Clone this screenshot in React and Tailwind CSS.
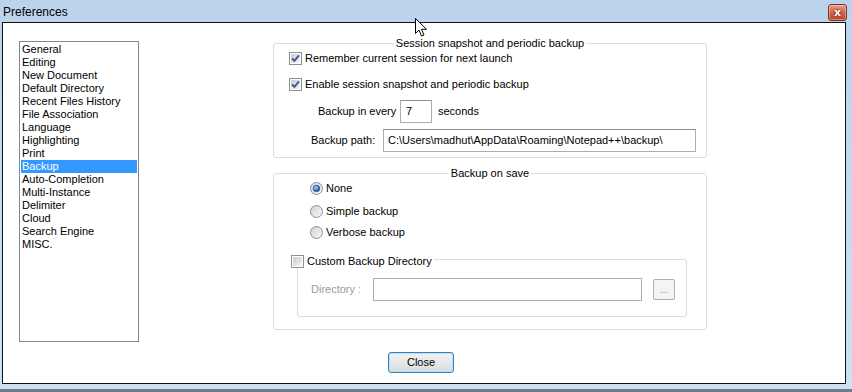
import React from 'react';

const categories = [
  'General',
  'Editing',
  'New Document',
  'Default Directory',
  'Recent Files History',
  'File Association',
  'Language',
  'Highlighting',
  'Print',
  'Backup',
  'Auto-Completion',
  'Multi-Instance',
  'Delimiter',
  'Cloud',
  'Search Engine',
  'MISC.',
];

// Win7 style checkbox
function CheckBox({ checked }) {
  return (
    <svg width="13" height="13" viewBox="0 0 13 13" className="shrink-0">
      <defs>
        <linearGradient id="cbIn" x1="0" y1="0" x2="1" y2="1">
          <stop offset="0" stopColor="#c9cdd2" />
          <stop offset="1" stopColor="#f4f4f4" />
        </linearGradient>
      </defs>
      <rect x="0.5" y="0.5" width="12" height="12" fill="#fff" stroke="#8e8f8f" />
      <rect x="2" y="2" width="9" height="9" fill="url(#cbIn)" />
      {checked && (
        <path d="M3 6.3 L5.4 8.8 L10 3.4" fill="none" stroke="#3a5592" strokeWidth="1.8" />
      )}
    </svg>
  );
}

function Radio({ checked }) {
  return (
    <svg width="13" height="13" viewBox="0 0 13 13" className="shrink-0">
      <defs>
        <linearGradient id="rdOut" x1="0" y1="0" x2="1" y2="1">
          <stop offset="0" stopColor="#d0d0d0" />
          <stop offset="1" stopColor="#fafafa" />
        </linearGradient>
        <radialGradient id="rdDot" cx="0.4" cy="0.35" r="0.7">
          <stop offset="0" stopColor="#9edcfc" />
          <stop offset="0.6" stopColor="#2a7fc6" />
          <stop offset="1" stopColor="#1b4f86" />
        </radialGradient>
      </defs>
      <circle cx="6.5" cy="6.5" r="6" fill="url(#rdOut)" stroke="#8e8f8f" />
      {checked && <circle cx="6.5" cy="6.5" r="3.3" fill="url(#rdDot)" stroke="#25446e" strokeWidth="0.6" />}
    </svg>
  );
}

function GroupTitle({ children }) {
  return (
    <span className="absolute left-1/2 -translate-x-1/2 top-[-7px] bg-white px-[2px] leading-[13px] whitespace-nowrap">
      {children}
    </span>
  );
}

export default function App() {
  return (
    <div className="relative w-[852px] h-[392px] overflow-hidden bg-gradient-to-b from-[#bcd3ec] to-[#cfe0f3] font-['Liberation_Sans',Arial,sans-serif] text-[11px] text-black">
      {/* Title bar */}
      <div className="h-[22px] flex items-start justify-between pl-[3px] pr-[5px]">
        <span className="text-[12px] leading-[14px] mt-[5px] text-black">Preferences</span>
        <div className="mt-[4px] w-[19px] h-[17px] rounded-[3px] border border-[#7b3326] bg-gradient-to-b from-[#e9a08e] via-[#d0614a] to-[#c2432a] flex items-center justify-center shadow-[inset_0_0_0_1px_rgba(255,255,255,0.35)]">
          <span className="text-white font-bold text-[11px] leading-none font-['DejaVu_Sans',sans-serif] drop-shadow-[0_0_1px_#5a1a10]">x</span>
        </div>
      </div>

      {/* Client area */}
      <div className="ml-[2px] w-[844px] h-[362px] border border-[#111] bg-white flex items-start">
        {/* Category list */}
        <div className="ml-[16px] mt-[18px] w-[120px] h-[301px] border border-[#828790] p-[1px] flex flex-col">
          {categories.map((c) => (
            <div
              key={c}
              className={`h-[13px] leading-[13px] pl-[1px] whitespace-nowrap ${c === 'Backup' ? 'bg-[#3399ff] text-white' : ''}`}
            >
              {c}
            </div>
          ))}
        </div>

        {/* Right column */}
        <div className="ml-[134px] mt-[20px] w-[434px] flex flex-col">
          {/* Session snapshot group */}
          <div className="relative h-[115px] border border-[#d5dfe5] rounded-[3px] flex flex-col pt-[8px]">
            <GroupTitle>Session snapshot and periodic backup</GroupTitle>
            <div className="h-[13px] flex items-center pl-[15px] gap-[3px]">
              <CheckBox checked />
              <span className="leading-[13px]">Remember current session for next launch</span>
            </div>
            <div className="h-[13px] mt-[13px] flex items-center pl-[15px] gap-[3px]">
              <CheckBox checked />
              <span className="leading-[13px]">Enable session snapshot and periodic backup</span>
            </div>
            <div className="h-[23px] mt-[9px] flex items-center pl-[44px]">
              <span className="w-[82px] whitespace-nowrap">Backup in every</span>
              <div className="w-[32px] h-[23px] border border-[#abadb3] border-t-[#8e9096] flex items-center pl-[5px]">7</div>
              <span className="ml-[6px]">seconds</span>
            </div>
            <div className="h-[23px] mt-[6px] flex items-center pl-[37px]">
              <span className="w-[72px] whitespace-nowrap">Backup path:</span>
              <div className="w-[313px] h-[23px] border border-[#abadb3] border-t-[#8e9096] flex items-center pl-[4px] whitespace-nowrap">
                C:\Users\madhut\AppData\Roaming\Notepad++\backup\
              </div>
            </div>
          </div>

          {/* Backup on save group */}
          <div className="relative mt-[15px] h-[157px] border border-[#d5dfe5] rounded-[3px] flex flex-col pt-[8px]">
            <GroupTitle>Backup on save</GroupTitle>
            <div className="h-[13px] flex items-center pl-[36px] gap-[3px]">
              <Radio checked />
              <span>None</span>
            </div>
            <div className="h-[13px] mt-[10px] flex items-center pl-[36px] gap-[3px]">
              <Radio />
              <span>Simple backup</span>
            </div>
            <div className="h-[13px] mt-[8px] flex items-center pl-[36px] gap-[3px]">
              <Radio />
              <span>Verbose backup</span>
            </div>

            {/* Custom backup directory sub group */}
            <div className="relative ml-[23px] mt-[20px] w-[390px] h-[58px] border border-[#d5dfe5] rounded-[3px] flex items-start pt-[18px] pl-[13px]">
              <div className="absolute left-[-7px] top-[-5px] flex items-center gap-[3px] bg-white pr-[2px] h-[13px]">
                <CheckBox />
                <span>Custom Backup Directory</span>
              </div>
              <span className="w-[62px] h-[23px] flex items-center text-[#9a9a9a] whitespace-nowrap">Directory :</span>
              <div className="w-[269px] h-[23px] border border-[#adadad] bg-white" />
              <div className="ml-[11px] mt-[1px] w-[22px] h-[21px] border border-[#adadad] rounded-[2px] bg-[#f4f4f4] flex items-center justify-center text-[#9a9a9a] leading-none">
                ...
              </div>
            </div>
          </div>

          {/* Close button */}
          <button className="ml-[115px] mt-[22px] w-[66px] h-[21px] rounded-[3px] border border-[#3c7fb1] bg-gradient-to-b from-[#f2f2f2] to-[#d9dde1] shadow-[inset_0_0_0_1px_#b7e2f8] flex items-center justify-center text-[11px] leading-none">
            Close
          </button>
        </div>
      </div>

      <div className="mt-[5px] h-[3px] bg-[#6e7c8c]" />

      {/* Mouse pointer */}
      <svg width="13" height="20" viewBox="0 0 13 20" className="absolute left-[415px] top-[18px]">
        <path d="M0.5 0.5 L0.5 15.5 L4 12 L6.5 18 L9 17 L6.5 11.3 L11.5 11.3 Z" fill="#fff" stroke="#000" strokeWidth="1" strokeLinejoin="round" />
      </svg>
    </div>
  );
}
